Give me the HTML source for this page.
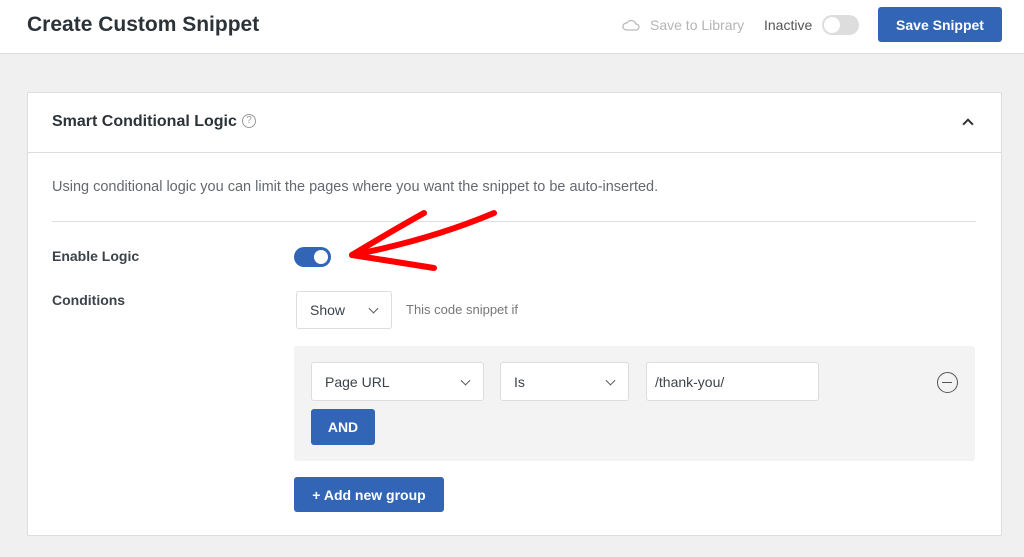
<!DOCTYPE html>
<html><head><style>
*{box-sizing:border-box;margin:0;padding:0}
body{width:1024px;height:557px;background:#f0f0f1;font-family:"Liberation Sans",sans-serif;position:relative;overflow:hidden;color:#3c434a}
.abs{position:absolute}
.top{left:0;top:0;width:1024px;height:54px;background:#fff;border-bottom:1px solid #ddd}
.btn{background:#3265b5;color:#fff;font-weight:bold;border-radius:3px;display:flex;align-items:center;justify-content:center}
.sel{background:#fff;border:1px solid #ddd;border-radius:3px;font-size:14px;color:#3c434a;display:flex;align-items:center;padding-left:13px}
.chev{position:absolute;right:14px;top:50%;width:7px;height:7px;border-right:1.5px solid #555;border-bottom:1.5px solid #555;transform:translateY(-70%) rotate(45deg)}
</style></head><body>
<div class="abs top"></div>
<div class="abs" style="left:27px;top:13px;font-size:21px;font-weight:bold;color:#2c3338">Create Custom Snippet</div>
<svg class="abs" style="left:622px;top:18px" width="18" height="14" viewBox="0 0 18 14"><path d="M4 12h10a3 3 0 0 0 0-6 5 5 0 0 0-9-1 3.5 3.5 0 0 0-1 7z" fill="none" stroke="#bbb" stroke-width="1.3"/></svg>
<div class="abs" style="left:650px;top:17px;font-size:14px;color:#b5b5b5">Save to Library</div>
<div class="abs" style="left:764px;top:17px;font-size:14px;color:#555">Inactive</div>
<div class="abs" style="left:822px;top:15px;width:37px;height:20px;border-radius:10px;background:#ddd"><div style="position:absolute;left:2px;top:2px;width:16px;height:16px;border-radius:50%;background:#fff"></div></div>
<div class="abs btn" style="left:878px;top:7px;width:124px;height:35px;font-size:14px">Save Snippet</div>

<div class="abs" style="left:27px;top:92px;width:975px;height:444px;background:#fff;border:1px solid #ddd;border-radius:2px"></div>
<div class="abs" style="left:28px;top:152px;width:973px;height:1px;background:#ddd"></div>
<div class="abs" style="left:52px;top:113px;font-size:16px;font-weight:bold;color:#2c3338">Smart Conditional Logic</div>
<div class="abs" style="left:242px;top:114px;width:14px;height:14px;border:1px solid #999;border-radius:50%;font-size:10px;color:#999;text-align:center;line-height:12px">?</div>
<div class="abs" style="left:964px;top:120px;width:8px;height:8px;border-left:2px solid #333;border-top:2px solid #333;transform:rotate(45deg)"></div>
<div class="abs" style="left:52px;top:179px;font-size:14.5px;color:#646970">Using conditional logic you can limit the pages where you want the snippet to be auto-inserted.</div>
<div class="abs" style="left:52px;top:221px;width:924px;height:1px;background:#ddd"></div>
<div class="abs" style="left:52px;top:248px;font-size:14px;font-weight:bold;color:#3c434a">Enable Logic</div>
<div class="abs" style="left:294px;top:247px;width:37px;height:20px;border-radius:10px;background:#3265b5"><div style="position:absolute;right:3px;top:3px;width:14px;height:14px;border-radius:50%;background:#fff"></div></div>
<div class="abs" style="left:52px;top:292px;font-size:14px;font-weight:bold;color:#3c434a">Conditions</div>
<div class="abs sel" style="left:296px;top:291px;width:96px;height:38px">Show<span class="chev"></span></div>
<div class="abs" style="left:406px;top:302px;font-size:13px;color:#777">This code snippet if</div>
<div class="abs" style="left:294px;top:346px;width:681px;height:115px;background:#f3f3f3;border-radius:3px"></div>
<div class="abs sel" style="left:311px;top:362px;width:173px;height:39px">Page URL<span class="chev"></span></div>
<div class="abs sel" style="left:500px;top:362px;width:129px;height:39px">Is<span class="chev"></span></div>
<div class="abs sel" style="left:646px;top:362px;width:173px;height:39px;padding-left:8px">/thank-you/</div>
<div class="abs" style="left:937px;top:372px;width:21px;height:21px;border:1.5px solid #555;border-radius:50%"><div style="position:absolute;left:4px;top:8.5px;width:10px;height:1.5px;background:#555"></div></div>
<div class="abs btn" style="left:311px;top:409px;width:64px;height:36px;font-size:14px">AND</div>
<div class="abs btn" style="left:294px;top:477px;width:150px;height:35px;font-size:14px">+ Add new group</div>
<svg class="abs" style="left:0;top:0" width="1024" height="557"><g fill="none" stroke="#f00" stroke-width="6" stroke-linecap="round" stroke-linejoin="round"><path d="M424 213 Q390 232 352 255"/><path d="M494 213 Q430 240 352 255 Q395 262 434 268"/></g></svg>
</body></html>
